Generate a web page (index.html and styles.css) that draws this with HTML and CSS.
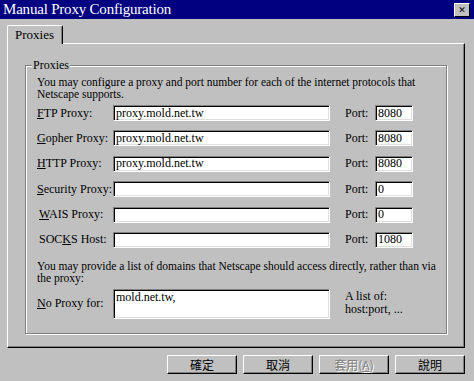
FILE: index.html
```html
<!DOCTYPE html>
<html lang="en">
<head>
    <meta charset="UTF-8">
    <title>Manual Proxy Configuration</title>
    <link rel="stylesheet" href="styles.css">
</head>
<body>
    <div class="window">
        <div class="titlebar">
            <span class="title">Manual Proxy Configuration</span>
            <span class="close">&#x2715;</span>
        </div>

        <div class="tabs">
            <span class="tab">Proxies</span>
        </div>

        <div class="panel">
            <div class="group">
                <span class="legend">Proxies</span>
                <p class="note">You may configure a proxy and port number for each of the internet protocols that Netscape supports.</p>

                <div class="rows">
                    <label class="lbl"><u>F</u>TP Proxy:</label>
                    <input class="field" type="text" value="proxy.mold.net.tw">
                    <span class="port">Port:</span>
                    <input class="field small" type="text" value="8080">

                    <label class="lbl"><u>G</u>opher Proxy:</label>
                    <input class="field" type="text" value="proxy.mold.net.tw">
                    <span class="port">Port:</span>
                    <input class="field small" type="text" value="8080">

                    <label class="lbl"><u>H</u>TTP Proxy:</label>
                    <input class="field" type="text" value="proxy.mold.net.tw">
                    <span class="port">Port:</span>
                    <input class="field small" type="text" value="8080">

                    <label class="lbl"><u>S</u>ecurity Proxy:</label>
                    <input class="field" type="text" value="">
                    <span class="port">Port:</span>
                    <input class="field small" type="text" value="0">

                    <label class="lbl indent"><u>W</u>AIS Proxy:</label>
                    <input class="field" type="text" value="">
                    <span class="port">Port:</span>
                    <input class="field small" type="text" value="0">

                    <label class="lbl indent">SOC<u>K</u>S Host:</label>
                    <input class="field" type="text" value="">
                    <span class="port">Port:</span>
                    <input class="field small" type="text" value="1080">
                </div>

                <p class="note second">You may provide a list of domains that Netscape should access directly, rather than via the proxy:</p>

                <div class="noproxy">
                    <label class="lbl"><u>N</u>o Proxy for:</label>
                    <textarea class="field area">mold.net.tw,</textarea>
                    <span class="hint">A list of:<br>host:port, ...</span>
                </div>
            </div>
        </div>

        <div class="buttons">
            <button class="btn">確定</button>
            <button class="btn">取消</button>
            <button class="btn disabled">套用(<u>A</u>)</button>
            <button class="btn">說明</button>
        </div>
    </div>
</body>
</html>
```

FILE: styles.css
```css
body {
    margin: 0;
    background-color: #c0c0c0;
    font-family: "Liberation Serif", "Noto Sans CJK TC", serif;
    font-size: 12px;
    color: #000;
}

.window {
    width: 474px;
    height: 381px;
    background-color: #c0c0c0;
}

.titlebar {
    height: 19px;
    background-color: #000080;
    color: white;
    display: flex;
    align-items: center;
    justify-content: space-between;
    padding: 0 4px 0 3px;
}

.title {
    font-size: 15px;
    letter-spacing: -0.2px;
    line-height: 19px;
}

.close {
    width: 14px;
    height: 12px;
    background-color: #c0c0c0;
    color: black;
    font-family: "DejaVu Sans", sans-serif;
    font-size: 9px;
    font-weight: bold;
    line-height: 12px;
    text-align: center;
    border: 1px solid;
    border-color: #fff #000 #000 #fff;
}

.tabs {
    display: flex;
    padding: 6px 0 0 7px;
}

.tab {
    height: 18px;
    line-height: 17px;
    padding: 0 8px 0 7px;
    border: 1px solid;
    border-bottom: none;
    border-color: #fff #000 #fff #fff;
    box-shadow: inset -1px 0 #808080;
    border-radius: 2px 2px 0 0;
    font-size: 13px;
    margin-bottom: -1px;
    position: relative;
    background-color: #c0c0c0;
    z-index: 1;
}

.panel {
    width: 458px;
    height: 305px;
    margin-left: 7px;
    box-sizing: border-box;
    border: 1px solid;
    border-color: #fff #000 #000 #fff;
    box-shadow: inset -1px -1px #808080;
    padding: 21px 0 0 17px;
}

.group {
    position: relative;
    width: 422px;
    height: 269px;
    box-sizing: border-box;
    border: 1px solid #808080;
    box-shadow: inset 1px 1px #fff, 1px 1px #fff;
    padding: 10px 0 0 11px;
}

.legend {
    position: absolute;
    top: -8px;
    left: 6px;
    padding: 0 1px;
    background-color: #c0c0c0;
    font-size: 12px;
    line-height: 14px;
}

.note {
    margin: 0;
    width: 405px;
    line-height: 12px;
    font-size: 11.5px;
}

.note.second {
    margin-top: 12px;
}

.rows {
    margin-top: 5px;
    display: grid;
    grid-template-columns: 76px 217px 45px 38px;
    grid-auto-rows: 16px;
    row-gap: 9.4px;
    align-items: center;
}

.lbl {
    font-size: 12px;
}

.lbl.indent {
    padding-left: 2px;
}

.port {
    padding-left: 15px;
}

.field {
    box-sizing: border-box;
    height: 16px;
    width: 100%;
    margin: 0;
    padding: 0 2px;
    font-family: "Liberation Serif", serif;
    font-size: 12px;
    background-color: #fff;
    color: #000;
    border: 1px solid;
    border-color: #808080 #fff #fff #808080;
    box-shadow: inset 1px 1px #000, inset -1px -1px #dfdfdf;
    outline: none;
}

.noproxy {
    margin-top: 5px;
    display: grid;
    grid-template-columns: 76px 217px 80px;
    align-items: center;
}

.area {
    height: 30px;
    resize: none;
    overflow: hidden;
    line-height: 13px;
    padding-top: 1px;
}

.hint {
    align-self: start;
    padding: 1px 0 0 15px;
    line-height: 13px;
}

.buttons {
    display: flex;
    justify-content: flex-end;
    gap: 6px;
    width: 465px;
    margin-top: 7px;
}

.btn {
    width: 70px;
    height: 19px;
    margin: 0;
    padding: 0;
    font-family: "Noto Sans CJK TC", sans-serif;
    font-size: 12px;
    line-height: 15px;
    background-color: #c0c0c0;
    color: #000;
    border: 1px solid;
    border-color: #fff #000 #000 #fff;
    box-shadow: inset -1px -1px #808080;
}

.btn.disabled {
    color: #808080;
    text-shadow: 1px 1px #fff;
}
```
